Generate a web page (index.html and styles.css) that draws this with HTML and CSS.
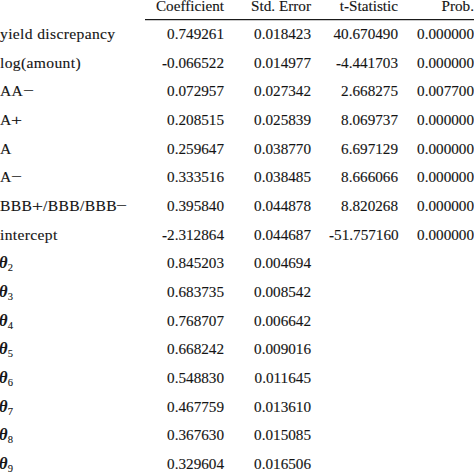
FILE: index.html
```html
<!DOCTYPE html>
<html lang="en">
<head>
<meta charset="utf-8">
<title>Ordered probit estimates</title>
<link rel="stylesheet" href="styles.css">
</head>
<body>
<div class="tbl">
  <div class="hd blank"></div>
  <div class="hd num">Coefficient</div>
  <div class="hd num">Std. Error</div>
  <div class="hd num">t-Statistic</div>
  <div class="hd num">Prob.</div>

  <div class="lab">yield discrepancy</div><div class="num">0.749261</div><div class="num">0.018423</div><div class="num">40.670490</div><div class="num">0.000000</div>
  <div class="lab">log(amount)</div><div class="num">-0.066522</div><div class="num">0.014977</div><div class="num">-4.441703</div><div class="num">0.000000</div>
  <div class="lab">AA<span class="op">−</span></div><div class="num">0.072957</div><div class="num">0.027342</div><div class="num">2.668275</div><div class="num">0.007700</div>
  <div class="lab">A<span class="op">+</span></div><div class="num">0.208515</div><div class="num">0.025839</div><div class="num">8.069737</div><div class="num">0.000000</div>
  <div class="lab">A</div><div class="num">0.259647</div><div class="num">0.038770</div><div class="num">6.697129</div><div class="num">0.000000</div>
  <div class="lab">A<span class="op">−</span></div><div class="num">0.333516</div><div class="num">0.038485</div><div class="num">8.666066</div><div class="num">0.000000</div>
  <div class="lab">BBB<span class="op">+</span>/BBB/BBB<span class="op">−</span></div><div class="num">0.395840</div><div class="num">0.044878</div><div class="num">8.820268</div><div class="num">0.000000</div>
  <div class="lab">intercept</div><div class="num">-2.312864</div><div class="num">0.044687</div><div class="num">-51.757160</div><div class="num">0.000000</div>

  <div class="lab th"><i>θ</i><sub>2</sub></div><div class="num">0.845203</div><div class="num">0.004694</div><div></div><div></div>
  <div class="lab th"><i>θ</i><sub>3</sub></div><div class="num">0.683735</div><div class="num">0.008542</div><div></div><div></div>
  <div class="lab th"><i>θ</i><sub>4</sub></div><div class="num">0.768707</div><div class="num">0.006642</div><div></div><div></div>
  <div class="lab th"><i>θ</i><sub>5</sub></div><div class="num">0.668242</div><div class="num">0.009016</div><div></div><div></div>
  <div class="lab th"><i>θ</i><sub>6</sub></div><div class="num">0.548830</div><div class="num">0.011645</div><div></div><div></div>
  <div class="lab th"><i>θ</i><sub>7</sub></div><div class="num">0.467759</div><div class="num">0.013610</div><div></div><div></div>
  <div class="lab th"><i>θ</i><sub>8</sub></div><div class="num">0.367630</div><div class="num">0.015085</div><div></div><div></div>
  <div class="lab th"><i>θ</i><sub>9</sub></div><div class="num">0.329604</div><div class="num">0.016506</div><div></div><div></div>
</div>
</body>
</html>
```

FILE: styles.css
```css
html, body {
  margin: 0;
  padding: 0;
  background: #ffffff;
  overflow: hidden;
}

body {
  width: 474px;
  height: 476px;
  color: #141414;
  font-family: "Liberation Serif", "Times New Roman", serif;
  font-size: 15.2px;
  -webkit-text-stroke: 0.12px #141414;
}

.tbl {
  display: grid;
  grid-template-columns: 145px 88px 87px 87px 76px;
  grid-template-rows: 20px;
  grid-auto-rows: 28.667px;
  width: 483px;
}

.tbl > div {
  line-height: 28.667px;
  white-space: nowrap;
}

.tbl > .hd {
  height: 20px;
  box-sizing: border-box;
  line-height: 11px;
  border-bottom: 1px solid #1a1a1a;
  box-shadow: 0 0.6px 0 rgba(0, 0, 0, 0.35);
}

.tbl > .hd.blank {
  border-bottom: none;
  box-shadow: none;
}

.num {
  text-align: right;
  padding: 0 9px;
}

.lab {
  font-size: 15.6px;
  letter-spacing: 0.35px;
}

.op {
  display: inline-block;
  transform: scaleX(1.25);
  margin: 0 1.5px 0 0.5px;
  letter-spacing: 0;
}

.th i {
  font-style: italic;
  font-size: 16.4px;
  margin-left: -1px;
  font-weight: bold;
}

.th sub {
  font-size: 10.5px;
  line-height: 0;
  vertical-align: -3px;
  letter-spacing: 0;
}
```
